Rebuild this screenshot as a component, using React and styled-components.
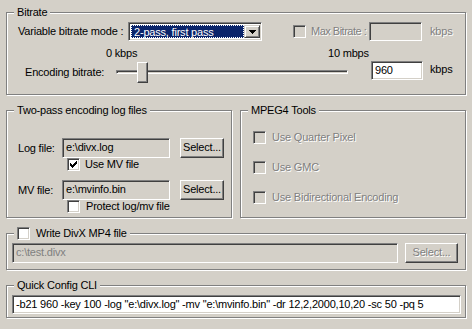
import React from "react";
import styled, { createGlobalStyle } from "styled-components";

const GlobalStyle = createGlobalStyle`
  html, body {
    margin: 0;
    padding: 0;
    background: #d4d0c8;
  }
  body {
    font-family: "Liberation Sans", Arial, sans-serif;
    font-size: 11px;
    line-height: 13px;
    letter-spacing: -0.2px;
    color: #000;
  }
  * {
    box-sizing: border-box;
  }
`;

const CLI =
  '-b21 960 -key 100 -log "e:\\divx.log" -mv "e:\\mvinfo.bin" -dr 12,2,2000,10,20 -sc 50 -pq 5';

const Dialog = styled.div`
  width: 472px;
  height: 329px;
  padding: 6px 0 0 6px;
  display: flex;
  flex-direction: column;
`;

const Group = styled.fieldset`
  margin: ${(p) => p.$top || 0}px 0 0 0;
  padding: ${(p) => p.$pad || "0"};
  width: ${(p) => p.$width || 460}px;
  min-width: 0;
  border: 1px solid #808080;
  box-shadow: 1px 1px 0 #fff, inset 1px 1px 0 #fff;
  display: flex;
  flex-direction: column;
`;

const Legend = styled.legend`
  margin-left: 7px;
  padding: 0 3px;
  height: 13px;
  line-height: 13px;
  display: flex;
  align-items: center;
  background: #d4d0c8;
`;

const Row = styled.div`
  display: flex;
  align-items: ${(p) => p.$align || "center"};
  margin-top: ${(p) => p.$top || 0}px;
  padding-left: ${(p) => p.$left || 0}px;
  height: ${(p) => p.$h || "auto"};
`;

const Label = styled.span`
  display: block;
  flex: none;
  width: ${(p) => (p.$w ? p.$w + "px" : "auto")};
  margin-left: ${(p) => p.$ml || 0}px;
  margin-top: ${(p) => p.$mt || 0}px;
  white-space: nowrap;
  letter-spacing: ${(p) => (p.$tight ? "-0.5px" : "inherit")};
  color: ${(p) => (p.$disabled ? "#808080" : "#000")};
  text-shadow: ${(p) => (p.$disabled ? "1px 1px 0 #fff" : "none")};
`;

const Field = styled.div`
  flex: none;
  width: ${(p) => p.$w}px;
  height: ${(p) => p.$h || 19}px;
  margin-left: ${(p) => p.$ml || 0}px;
  border: 1px solid;
  border-color: #808080 #fff #fff #808080;
  box-shadow: inset 1px 1px 0 #404040, inset -1px -1px 0 #d4d0c8;
  background: ${(p) => (p.$white ? "#fff" : "#d4d0c8")};
  color: ${(p) => (p.$disabled ? "#808080" : "#000")};
  padding: 2px 0 0 3px;
  white-space: nowrap;
  overflow: hidden;
`;

const Button = styled.div`
  flex: none;
  width: ${(p) => p.$w}px;
  height: 20px;
  margin-left: ${(p) => p.$ml || 0}px;
  border: 1px solid;
  border-color: #fff #404040 #404040 #fff;
  box-shadow: inset -1px -1px 0 #808080;
  display: flex;
  align-items: center;
  justify-content: center;
  padding-bottom: 1px;
  color: ${(p) => (p.$disabled ? "#808080" : "#000")};
  text-shadow: ${(p) => (p.$disabled ? "1px 1px 0 #fff" : "none")};
`;

const Box = styled.div`
  flex: none;
  width: 13px;
  height: 13px;
  margin-left: ${(p) => p.$ml || 0}px;
  border: 1px solid;
  border-color: #808080 #fff #fff #808080;
  box-shadow: inset 1px 1px 0 #404040, inset -1px -1px 0 #d4d0c8;
  background: ${(p) => (p.$disabled ? "#d4d0c8" : "#fff")};
  display: flex;
  align-items: center;
  justify-content: center;
`;

const Check = ({ checked, disabled, ml, label, gap = 5, w, tight }) => (
  <>
    <Box $disabled={disabled} $ml={ml}>
      {checked && (
        <svg width="7" height="7" viewBox="0 0 7 7" shapeRendering="crispEdges">
          <rect x="0" y="2" width="1" height="3" fill="#000" />
          <rect x="1" y="3" width="1" height="3" fill="#000" />
          <rect x="2" y="4" width="1" height="3" fill="#000" />
          <rect x="3" y="3" width="1" height="3" fill="#000" />
          <rect x="4" y="2" width="1" height="3" fill="#000" />
          <rect x="5" y="1" width="1" height="3" fill="#000" />
          <rect x="6" y="0" width="1" height="3" fill="#000" />
        </svg>
      )}
    </Box>
    {label && (
      <Label $ml={gap} $w={w} $tight={tight} $disabled={disabled}>
        {label}
      </Label>
    )}
  </>
);

const Combo = styled.div`
  flex: none;
  width: 134px;
  height: 19px;
  border: 1px solid;
  border-color: #808080 #fff #fff #808080;
  box-shadow: inset 1px 1px 0 #404040, inset -1px -1px 0 #d4d0c8;
  background: #fff;
  padding: 2px 1px 2px 2px;
  display: flex;
`;

const Selected = styled.div`
  flex: 1;
  background: #0a246a;
  color: #fff;
  outline: 1px dotted #fff;
  outline-offset: -1px;
  padding: 1px 0 0 3px;
  white-space: nowrap;
`;

const DropButton = styled.div`
  flex: none;
  width: 16px;
  border: 1px solid;
  border-color: #d4d0c8 #404040 #404040 #d4d0c8;
  box-shadow: inset 1px 1px 0 #fff, inset -1px -1px 0 #808080;
  background: #d4d0c8;
  display: flex;
  align-items: center;
  justify-content: center;
`;

const Slider = styled.div`
  position: relative;
  flex: none;
  width: 232px;
  height: 22px;
`;

const Track = styled.div`
  margin-top: 9px;
  height: 4px;
  border: 1px solid;
  border-color: #808080 #fff #fff #808080;
  box-shadow: inset 1px 1px 0 #404040, inset -1px -1px 0 #d4d0c8;
`;

const Thumb = styled.div`
  position: absolute;
  left: 21px;
  top: 1px;
  width: 11px;
  height: 21px;
  background: #d4d0c8;
  border: 1px solid;
  border-color: #fff #404040 #404040 #fff;
  box-shadow: inset -1px -1px 0 #808080;
`;

const Columns = styled.div`
  display: flex;
  gap: 8px;
  margin-top: 9px;
`;

export default function App() {
  return (
    <>
      <GlobalStyle />
      <Dialog>
        <Group $pad="0 0 11px 0">
          <Legend>Bitrate</Legend>
          <Row $top={3} $left={11}>
            <Label $w={110}>Variable bitrate mode :</Label>
            <Combo>
              <Selected>2-pass, first pass</Selected>
              <DropButton>
                <svg width="7" height="4" viewBox="0 0 7 4" shapeRendering="crispEdges">
                  <path d="M0 0h7v1H0zM1 1h5v1H1zM2 2h3v1H2zM3 3h1v1H3z" fill="#000" />
                </svg>
              </DropButton>
            </Combo>
            <Check disabled ml={31} gap={5} w={58} tight label="Max Bitrate :" />
            <Field $w={53} $h={19} />
            <Label $ml={8} $disabled>kbps</Label>
          </Row>
          <Row $top={6} $left={99} $h="12px">
            <Label $w={222}>0 kbps</Label>
            <Label>10 mbps</Label>
          </Row>
          <Row $top={2} $left={18} $align="flex-start">
            <Label $w={91} $mt={5}>Encoding bitrate:</Label>
            <Slider>
              <Track />
              <Thumb />
            </Slider>
            <Field $w={52} $ml={23} $white>960</Field>
            <Label $ml={7} $mt={2}>kbps</Label>
          </Row>
        </Group>

        <Columns>
          <Group $width={226} $pad="0 0 4px 0">
            <Legend>Two-pass encoding log files</Legend>
            <Row $top={21} $left={11}>
              <Label $w={44}>Log file:</Label>
              <Field $w={108} $h={20}>e:\divx.log</Field>
              <Button $w={44} $ml={10}>Select...</Button>
            </Row>
            <Row $left={60}>
              <Check checked label="Use MV file" gap={5} />
            </Row>
            <Row $top={9} $left={11}>
              <Label $w={44}>MV file:</Label>
              <Field $w={108} $h={20}>e:\mvinfo.bin</Field>
              <Button $w={44} $ml={10}>Select...</Button>
            </Row>
            <Row $left={60}>
              <Check label="Protect log/mv file" gap={6} />
            </Row>
          </Group>

          <Group $width={226}>
            <Legend>MPEG4 Tools</Legend>
            <Row $top={14} $left={12}>
              <Check disabled label="Use Quarter Pixel" gap={6} />
            </Row>
            <Row $top={17} $left={12}>
              <Check disabled label="Use GMC" gap={6} />
            </Row>
            <Row $top={17} $left={12}>
              <Check disabled label="Use Bidirectional Encoding" gap={6} />
            </Row>
          </Group>
        </Columns>

        <Group $top={9} $pad="0 0 6px 0">
          <Legend>
            <Check label="Write DivX MP4 file" gap={6} />
          </Legend>
          <Row $top={3} $left={5}>
            <Field $w={386} $h={20} $disabled>c:\test.divx</Field>
            <Button $w={53} $ml={7} $disabled>Select...</Button>
          </Row>
        </Group>

        <Group $top={9} $pad="0 0 3px 0">
          <Legend>Quick Config CLI</Legend>
          <Row $top={3} $left={5}>
            <Field $w={449} $h={19} $white>{CLI}</Field>
          </Row>
        </Group>
      </Dialog>
    </>
  );
}
